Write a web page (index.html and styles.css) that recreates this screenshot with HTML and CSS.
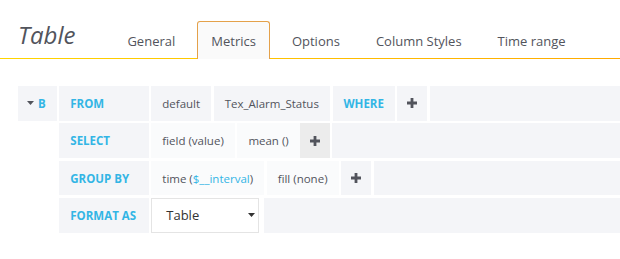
FILE: index.html
```html
<!DOCTYPE html>
<html lang="en">
<head>
    <meta charset="UTF-8">
    <meta name="viewport" content="width=device-width, initial-scale=1.0">
    <title>Table - Metrics</title>
    <link rel="stylesheet" href="styles.css">
</head>
<body>
    <div class="edit-header">
        <h2 class="edit-title">Table</h2>
        <ul class="tabs">
            <li class="tab">General</li>
            <li class="tab active">Metrics</li>
            <li class="tab">Options</li>
            <li class="tab">Column Styles</li>
            <li class="tab">Time range</li>
        </ul>
    </div>

    <div class="query-editor">
        <!-- FROM -->
        <div class="form-row">
            <div class="cell ref-id">
                <svg class="caret" width="7" height="4" viewBox="0 0 7 4"><path d="M0 0h7L3.5 4z" fill="#52545c"/></svg>
                <span class="keyword">B</span>
            </div>
            <div class="cell label keyword">FROM</div>
            <div class="cell segment">default</div>
            <div class="cell segment">Tex_Alarm_Status</div>
            <div class="cell segment keyword">WHERE</div>
            <div class="cell segment plus">
                <svg width="10" height="10" viewBox="0 0 10 10"><path d="M3.6 0h2.8v3.6H10v2.8H6.4V10H3.6V6.4H0V3.6h3.6z" fill="#52545c"/></svg>
            </div>
            <div class="cell filler"></div>
        </div>

        <!-- SELECT -->
        <div class="form-row">
            <div class="cell label keyword">SELECT</div>
            <div class="cell part">field (value)</div>
            <div class="cell part">mean ()</div>
            <div class="cell plus dark">
                <svg width="10" height="10" viewBox="0 0 10 10"><path d="M3.6 0h2.8v3.6H10v2.8H6.4V10H3.6V6.4H0V3.6h3.6z" fill="#52545c"/></svg>
            </div>
            <div class="cell filler"></div>
        </div>

        <!-- GROUP BY -->
        <div class="form-row">
            <div class="cell label keyword">GROUP BY</div>
            <div class="cell part">time (<span class="var">$__interval</span>)</div>
            <div class="cell part">fill (none)</div>
            <div class="cell segment plus">
                <svg width="10" height="10" viewBox="0 0 10 10"><path d="M3.6 0h2.8v3.6H10v2.8H6.4V10H3.6V6.4H0V3.6h3.6z" fill="#52545c"/></svg>
            </div>
            <div class="cell filler"></div>
        </div>

        <!-- FORMAT AS -->
        <div class="form-row">
            <div class="cell label keyword">FORMAT AS</div>
            <div class="cell select">
                <span>Table</span>
                <svg width="7" height="4" viewBox="0 0 7 4"><path d="M0 0h7L3.5 4z" fill="#333"/></svg>
            </div>
            <div class="cell filler"></div>
        </div>
    </div>
</body>
</html>
```

FILE: styles.css
```css
body {
    margin: 0;
    font-family: "Open Sans", "Liberation Sans", sans-serif;
    color: #52545c;
    background: #fff;
}
.edit-header {
    display: flex;
    align-items: flex-end;
    height: 58px;
    padding-left: 18px;
    border-bottom: 1px solid #ffc500;
    border-image: linear-gradient(to right, #ffd500, #ffaa00) 1;
}
.edit-title {
    margin: 0 38px 10px 0;
    font-size: 24px;
    font-style: italic;
    font-weight: 400;
    line-height: 26px;
    color: #52545c;
}
.tabs {
    display: flex;
    list-style: none;
    margin: 0;
    padding: 0;
}
.tab {
    height: 36px;
    line-height: 38px;
    padding: 0 13px;
    margin-right: 8px;
    font-size: 13px;
    border: 1px solid transparent;
    border-bottom: none;
    border-radius: 3px 3px 0 0;
}
.tab.active {
    border-color: #e4a14a;
    background: #fafafa;
    margin-bottom: -1px;
    height: 37px;
}
.query-editor {
    margin-top: 27px;
    padding-left: 18px;
}
.form-row {
    display: flex;
    gap: 2.6px;
    height: 34.7px;
    margin-bottom: 2.7px;
}
.cell {
    display: flex;
    align-items: center;
    padding: 0 11px;
    font-size: 11.5px;
    background: #f4f5f8;
    white-space: nowrap;
}
.form-row:not(:first-child) {
    padding-left: 41.3px;
}
.ref-id {
    width: 38.7px;
    box-sizing: border-box;
    padding: 0 0 0 9px;
    gap: 4px;
}
.keyword {
    color: #33b5e5;
    font-weight: 700;
}
.label {
    width: 89.4px;
    box-sizing: border-box;
}
.part {
    background: #fafbfc;
}
.var {
    color: #33b5e5;
}
.plus {
    width: 30px;
    box-sizing: border-box;
    justify-content: center;
    padding: 0;
}
.plus.dark {
    background: #ececec;
    margin-left: -2.6px;
}
.filler {
    flex: 1;
    padding: 0;
}
.select {
    width: 108px;
    box-sizing: border-box;
    justify-content: space-between;
    padding: 0 3px 0 14px;
    margin-right: 1.7px;
    background: #fff;
    border: 1px solid #e4e4e4;
    font-size: 13px;
    color: #333;
}
```
